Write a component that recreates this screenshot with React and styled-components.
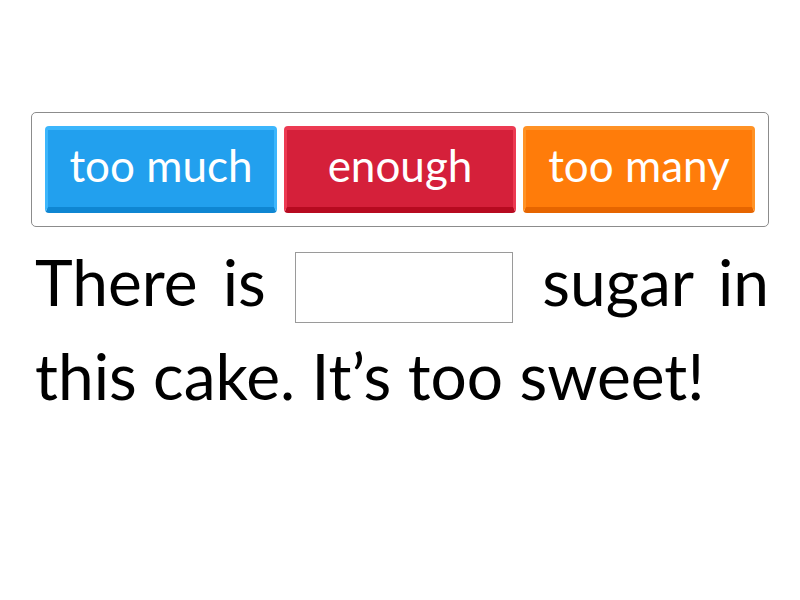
import React from 'react';
import styled, { createGlobalStyle } from 'styled-components';

const GlobalStyle = createGlobalStyle`
  html, body {
    margin: 0;
    padding: 0;
    background: #fff;
  }
  body {
    font-family: Lato, "Noto Sans", sans-serif;
  }
`;

const Page = styled.div`
  width: 800px;
  height: 600px;
  box-sizing: border-box;
  padding: 112px 31px 0 31px;
`;

const Tray = styled.div`
  display: flex;
  gap: 7px;
  padding: 13px;
  border: 1px solid #8c8c8c;
  border-radius: 5px;
`;

const Word = styled.div`
  flex: 1;
  height: 87px;
  box-sizing: border-box;
  display: flex;
  align-items: center;
  justify-content: center;
  border-radius: 4px;
  color: #fff;
  font-size: 44px;
  background: ${p => p.main};
  border-top: 4px solid ${p => p.light};
  border-left: 3px solid ${p => p.light};
  border-right: 3px solid ${p => p.light};
  border-bottom: 6px solid ${p => p.dark};
  padding-bottom: 7px;
`;

const Sentence = styled.p`
  margin: 8px 0 0 4px;
  font-size: 64px;
  line-height: 94px;
  color: #000;
  text-align: justify;
  text-align-last: left;
`;

const Gap = styled.span`
  display: inline-block;
  width: 218px;
  height: 71px;
  box-sizing: border-box;
  border: 1px solid #9a9a9a;
  vertical-align: -17px;
  margin: 0 4px;
`;

const words = [
  { text: 'too much', main: '#22a0ee', light: '#3cb6fc', dark: '#0f86d2' },
  { text: 'enough', main: '#d5203a', light: '#ec3a52', dark: '#b70a20' },
  { text: 'too many', main: '#ff7c0a', light: '#ff9225', dark: '#e66500' },
];

export default function App() {
  return (
    <Page>
      <GlobalStyle />
      <Tray>
        {words.map(w => (
          <Word key={w.text} main={w.main} light={w.light} dark={w.dark}>
            {w.text}
          </Word>
        ))}
      </Tray>
      <Sentence>
        There is <Gap /> sugar in this cake. It’s too sweet!
      </Sentence>
    </Page>
  );
}
